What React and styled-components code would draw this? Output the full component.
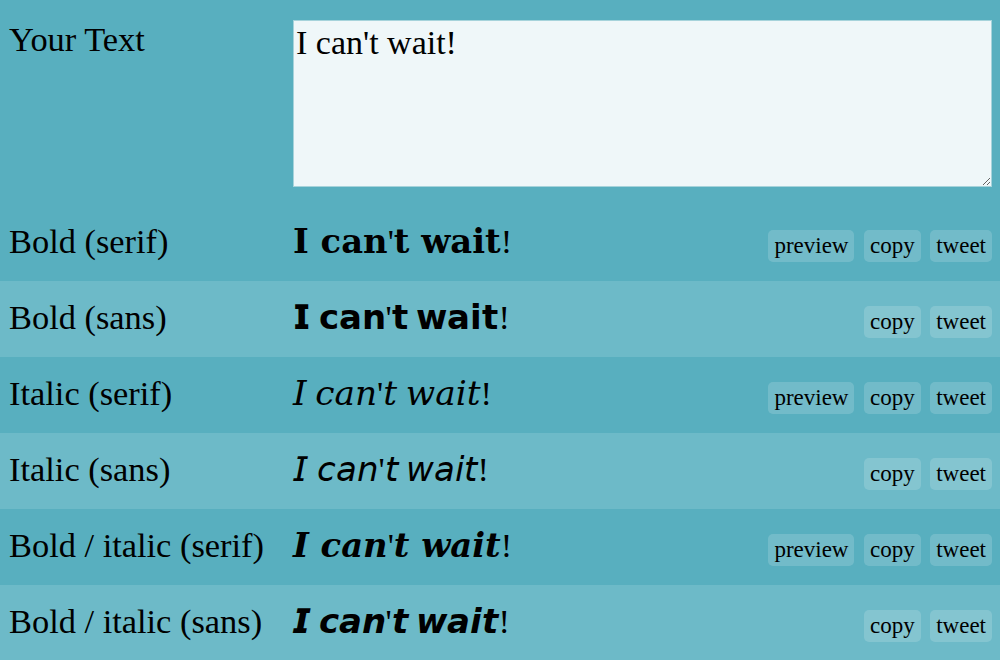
import React, { useEffect, useRef } from "react";
import styled, { createGlobalStyle } from "styled-components";

const Global = createGlobalStyle`
  html, body { margin: 0; padding: 0; }
  body {
    background: #58afbf;
    font-family: "Liberation Serif", "DejaVu Serif", serif;
    color: #000;
  }
`;

const Page = styled.div`
  display: flex;
  flex-direction: column;
  width: 1000px;
  min-height: 660px;
  background: #58afbf;
  overflow: hidden;
`;

const InputRow = styled.div`
  display: grid;
  grid-template-columns: 293px 1fr;
  padding: 20px 8px 18px 0;
  align-items: start;
`;

const Row = styled.div`
  box-sizing: border-box;
  display: grid;
  grid-template-columns: 293px 1fr auto;
  align-items: center;
  height: 76px;
  padding: 0 8px 4px 0;
  background: ${(p) => (p.$alt ? "#6dbac8" : "#58afbf")};
`;

const Label = styled.div`
  padding-left: 9px;
  font-size: 34.4px;
  line-height: 39px;
  white-space: nowrap;
`;

const TextBox = styled.textarea`
  box-sizing: border-box;
  width: 699px;
  height: 167px;
  margin: 0;
  padding: 2px;
  border: 1px solid #a6d3db;
  background: #eff7f9;
  font-family: "Liberation Serif", "DejaVu Serif", serif;
  font-size: 34px;
  line-height: 39px;
  color: #000;
  outline: none;
`;

const Fancy = styled.div`
  font-size: 34.4px;
  line-height: 39px;
  white-space: nowrap;
`;

const Glyphs = styled.span`
  ${(p) =>
    p.$serif
      ? `
    font-family: "DejaVu Serif", serif;
    font-weight: 700;
    font-size: 33.8px;
    font-style: ${p.$italic ? "italic" : "normal"};
  `
      : ""}
`;

const Actions = styled.div`
  display: flex;
  gap: 9.5px;
  margin-top: 10px;
`;

const Btn = styled.button`
  height: 32px;
  padding: 0 6px;
  border: none;
  border-radius: 5px;
  background: rgba(255, 255, 255, 0.16);
  font-family: "Liberation Serif", "DejaVu Serif", serif;
  font-size: 23px;
  color: #000;
  cursor: pointer;
`;

const rows = [
  { label: "Bold (serif)", parts: ["I can", "'", "t wait", "!"], serif: true, preview: true },
  { label: "Bold (sans)", parts: ["𝗜 𝗰𝗮𝗻", "'", "𝘁 𝘄𝗮𝗶𝘁", "!"], preview: false },
  { label: "Italic (serif)", parts: ["𝐼 𝑐𝑎𝑛", "'", "𝑡 𝑤𝑎𝑖𝑡", "!"], preview: true },
  { label: "Italic (sans)", parts: ["𝘐 𝘤𝘢𝘯", "'", "𝘵 𝘸𝘢𝘪𝘵", "!"], preview: false },
  { label: "Bold / italic (serif)", parts: ["I can", "'", "t wait", "!"], serif: true, italic: true, preview: true },
  { label: "Bold / italic (sans)", parts: ["𝙄 𝙘𝙖𝙣", "'", "𝙩 𝙬𝙖𝙞𝙩", "!"], preview: false },
];

export default function App() {
  const ref = useRef(null);
  useEffect(() => {
    const el = ref.current;
    if (el) {
      el.focus();
      const n = el.value.length;
      el.setSelectionRange(n, n);
    }
  }, []);
  return (
    <>
      <Global />
      <Page>
        <InputRow>
          <Label>Your Text</Label>
          <TextBox ref={ref} defaultValue="I can't wait!" />
        </InputRow>
        {rows.map((r, i) => (
          <Row key={r.label} $alt={i % 2 === 1}>
            <Label>{r.label}</Label>
            <Fancy>
              <Glyphs $serif={r.serif} $italic={r.italic}>{r.parts[0]}</Glyphs>
              {r.parts[1]}
              <Glyphs $serif={r.serif} $italic={r.italic}>{r.parts[2]}</Glyphs>
              {r.parts[3]}
            </Fancy>
            <Actions>
              {r.preview && <Btn>preview</Btn>}
              <Btn>copy</Btn>
              <Btn>tweet</Btn>
            </Actions>
          </Row>
        ))}
      </Page>
    </>
  );
}
